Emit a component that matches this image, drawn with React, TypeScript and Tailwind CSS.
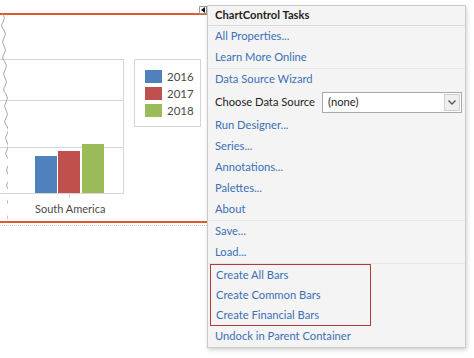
import React from "react";

const groups: string[][] = [
  ["All Properties...", "Learn More Online"],
  ["Data Source Wizard", "#combo", "Run Designer...", "Series...", "Annotations...", "Palettes...", "About"],
  ["Save...", "Load..."],
];

const bars = ["Create All Bars", "Create Common Bars", "Create Financial Bars"];

const legend = [
  { year: "2016", color: "bg-[#4f81bd]" },
  { year: "2017", color: "bg-[#c0504d]" },
  { year: "2018", color: "bg-[#9bbb59]" },
];

const TornEdge: React.FC = () => (
  <svg className="absolute left-0 top-[14px]" width="8" height="208" viewBox="0 0 8 208">
    <path
      d="M3 0 q3 4 0 8 q-3 4 1 8 q3 4 0 8 q-3 4 0 8 q3 4 0 8 q-3 4 1 8 q3 4 0 8 q-3 4 0 8 q3 4 0 8 q-3 4 1 8 q3 4 0 8 q-3 4 0 8 q3 4 0 8 q-3 4 1 8 q3 4 0 8 q-3 4 0 8 q3 4 0 8 q-3 4 1 8 q3 4 0 8 q-3 4 0 8 q3 4 0 8 q-3 4 1 8 q3 4 0 8 q-3 4 0 8 q3 4 0 8 q-3 4 1 8"
      fill="none"
      stroke="#a9a9a9"
      strokeWidth="1"
    />
  </svg>
);

const Chart: React.FC = () => (
  <div className="relative w-[207px] pt-[13px]">
    <div className="h-[210px] border-y-2 border-[#e2592f] flex">
      <div className="w-[124px] pt-[44px] shrink-0">
        <div className="border-t border-r border-[#d6d6d6]">
          <div className="h-[41px] border-b border-[#d6d6d6]" />
          <div className="h-[47px] border-b border-[#d6d6d6]" />
          <div className="relative h-[46px] border-b border-[#d6d6d6] flex items-end pl-[35px]">
            <div className="w-[22px] h-[37px] bg-[#4f81bd]" />
            <div className="w-[22px] h-[42px] ml-[1px] bg-[#c0504d]" />
            <div className="w-[22px] h-[49px] ml-[2px] bg-[#9bbb59]" />
            <div className="absolute left-[69px] -bottom-[5px] w-px h-[4px] bg-[#d6d6d6]" />
          </div>
        </div>
        <div className="pl-[35px] w-[104px] text-center text-[11px] leading-[14px] mt-[8px] text-[#4a4a4a] whitespace-nowrap">
          South America
        </div>
      </div>
      <div className="ml-[10px] mt-[44px] w-[67px] h-[68px] border border-[#d6d6d6] bg-white pl-[10px] pt-[10px] flex flex-col gap-[4px]">
        {legend.map((l) => (
          <div key={l.year} className="flex items-center h-[13px]">
            <div className={`w-[17px] h-[13px] ${l.color}`} />
            <span className="ml-[5px] text-[11.5px] leading-[13px] text-[#4a4a4a]">{l.year}</span>
          </div>
        ))}
      </div>
    </div>
    <div className="mt-[2px] border-t border-dotted border-[#c8c8c8]" />
    <TornEdge />
  </div>
);

const Combo: React.FC = () => (
  <div className="flex items-center h-[25px] pl-[7px] pr-[3px]">
    <span className="text-[#1e1e1e] w-[107px] whitespace-nowrap">Choose Data Source</span>
    <div className="flex-1 h-[21px] border border-[#a9a9a9] bg-white flex items-center pl-[5px] pr-[1px]">
      <span className="flex-1 text-[#1e1e1e]">(none)</span>
      <div className="w-[16px] h-[17px] border border-[#cfcfcf] bg-[#efefef] flex items-center justify-center">
        <svg width="8" height="5" viewBox="0 0 8 5">
          <path d="M0.5 0.5 L4 4 L7.5 0.5" fill="none" stroke="#555" strokeWidth="1.3" />
        </svg>
      </div>
    </div>
  </div>
);

const Item: React.FC<{ text: string }> = ({ text }) => (
  <div className="h-[21px] flex items-center pl-[7px] text-[#3b70b6] whitespace-nowrap">{text}</div>
);

const TaskPanel: React.FC = () => (
  <div className="absolute left-[207px] top-[5px] w-[259px] h-[343px] bg-[#f4f4f4] border border-[#cccccc] shadow-[1px_2px_4px_rgba(0,0,0,0.18)] text-[11.2px]">
    <div className="h-[20px] flex items-center pl-[7px] font-bold text-[#1e1e1e] border-b border-[#dadada]">
      ChartControl Tasks
    </div>
    {groups.map((g, i) => (
      <div key={i} className="border-b border-[#e6e6e6]">
        {g.map((t) => (t === "#combo" ? <Combo key={t} /> : <Item key={t} text={t} />))}
      </div>
    ))}
    <div className="ml-[2px] w-[161px] border border-[#b23a3a]">
      {bars.map((t) => (
        <div key={t} className="h-[20px] flex items-center pl-[5px] text-[#3b70b6]">{t}</div>
      ))}
    </div>
    <Item text="Undock in Parent Container" />
  </div>
);

export default function App() {
  return (
    <div className="relative w-[474px] h-[358px] bg-white overflow-hidden font-['Lato',sans-serif]">
      <Chart />
      <div className="absolute left-[199px] top-[6px] w-[8px] h-[8px] border border-[#9a9a9a] bg-white flex items-center justify-center">
        <svg width="4" height="6" viewBox="0 0 4 6">
          <path d="M4 0 L0 3 L4 6 Z" fill="#111" />
        </svg>
      </div>
      <TaskPanel />
    </div>
  );
}
